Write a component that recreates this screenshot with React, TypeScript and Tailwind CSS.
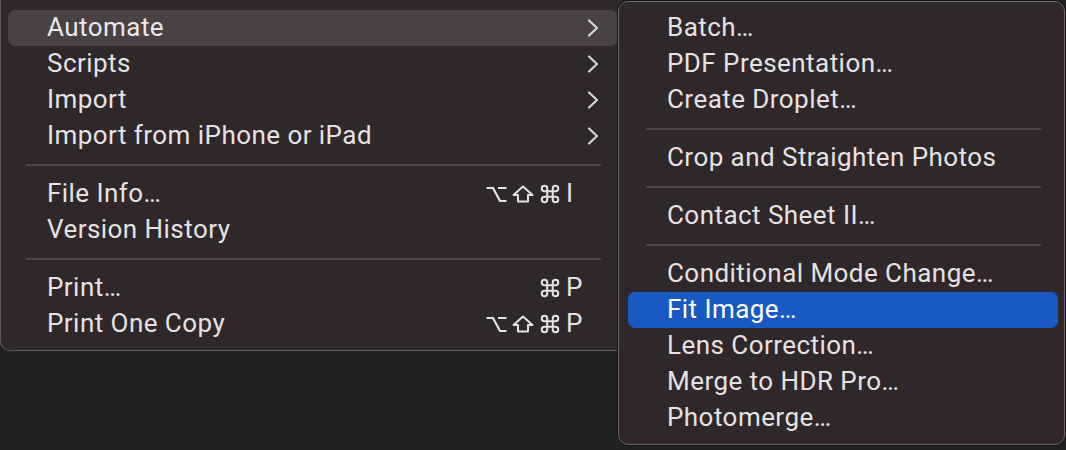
import React from 'react';

type Item =
  | { kind: 'item'; label: string; submenu?: boolean; mods?: string[]; keyChar?: string; active?: boolean; selected?: boolean }
  | { kind: 'sep' };

const fileItems: Item[] = [
  { kind: 'item', label: 'Automate', submenu: true, active: true },
  { kind: 'item', label: 'Scripts', submenu: true },
  { kind: 'item', label: 'Import', submenu: true },
  { kind: 'item', label: 'Import from iPhone or iPad', submenu: true },
  { kind: 'sep' },
  { kind: 'item', label: 'File Info…', mods: ['opt', 'shift', 'cmd'], keyChar: 'I' },
  { kind: 'item', label: 'Version History' },
  { kind: 'sep' },
  { kind: 'item', label: 'Print…', mods: ['cmd'], keyChar: 'P' },
  { kind: 'item', label: 'Print One Copy', mods: ['opt', 'shift', 'cmd'], keyChar: 'P' },
];

const automateItems: Item[] = [
  { kind: 'item', label: 'Batch…' },
  { kind: 'item', label: 'PDF Presentation…' },
  { kind: 'item', label: 'Create Droplet…' },
  { kind: 'sep' },
  { kind: 'item', label: 'Crop and Straighten Photos' },
  { kind: 'sep' },
  { kind: 'item', label: 'Contact Sheet II…' },
  { kind: 'sep' },
  { kind: 'item', label: 'Conditional Mode Change…' },
  { kind: 'item', label: 'Fit Image…', selected: true },
  { kind: 'item', label: 'Lens Correction…' },
  { kind: 'item', label: 'Merge to HDR Pro…' },
  { kind: 'item', label: 'Photomerge…' },
];

const Chevron = () => (
  <svg width="12" height="18" viewBox="0 0 12 18" fill="none" stroke="#d9d5d6" strokeWidth="2.2" strokeLinecap="round" strokeLinejoin="round">
    <path d="M2 1.5L10 9L2 16.5" />
  </svg>
);

const OptionKey = () => (
  <svg width="21" height="17" viewBox="0 0 21 17" fill="none" stroke="#e6e2e3" strokeWidth="2.2">
    <path d="M0.5 2H7L14 15H20.5M12 2H20.5" />
  </svg>
);

const ShiftKey = () => (
  <svg width="22" height="18" viewBox="0 0 22 18" fill="none" stroke="#e6e2e3" strokeWidth="2" strokeLinejoin="round">
    <path d="M11 1.5L20.5 10H16V16.5H6V10H1.5Z" />
  </svg>
);

const CmdKey = () => (
  <svg width="22" height="22" viewBox="0 0 24 24" fill="none" stroke="#e6e2e3" strokeWidth="2.2" strokeLinecap="round" strokeLinejoin="round">
    <path d="M15 6v12a3 3 0 1 0 3-3H6a3 3 0 1 0 3 3V6a3 3 0 1 0-3 3h12a3 3 0 1 0-3-3" />
  </svg>
);

const Shortcut = ({ mods, keyChar }: { mods: string[]; keyChar: string }) => (
  <div className="flex items-center gap-[5px] pr-[36px]">
    {mods.map((m) => (
      <span key={m} className="flex items-center">
        {m === 'opt' && <OptionKey />}
        {m === 'shift' && <ShiftKey />}
        {m === 'cmd' && <CmdKey />}
      </span>
    ))}
    <span className="w-[16px] pb-[2px] text-[26px] leading-none text-[#e6e2e3]">{keyChar}</span>
  </div>
);

const MenuRows = ({ items }: { items: Item[] }) => (
  <>
    {items.map((item, i) =>
      item.kind === 'sep' ? (
        <div key={i} className="h-[22px] flex items-center pl-[18px] pr-[17px]">
          <div className="h-[2px] w-full bg-[#4d4547]" />
        </div>
      ) : (
        <div
          key={i}
          className={`h-[36px] flex items-center justify-between rounded-[7px] pl-[39px] ${
            item.selected ? 'bg-[#1859c2] text-white' : item.active ? 'bg-[#4a4145] text-[#ece8e9]' : 'text-[#e6e2e3]'
          }`}
        >
          <span className="pb-[2px] text-[26px] leading-none whitespace-nowrap">{item.label}</span>
          {item.submenu && (
            <span className="pr-[19px] flex items-center">
              <Chevron />
            </span>
          )}
          {item.mods && item.keyChar && <Shortcut mods={item.mods} keyChar={item.keyChar} />}
        </div>
      )
    )}
  </>
);

export default function App() {
  return (
    <div className="w-[1066px] h-[450px] overflow-hidden bg-[#222222] flex items-start font-['Roboto',sans-serif] tracking-[0.45px]">
      <div className="w-[626px] shrink-0 bg-[#2f2729] border-l border-b border-[#5f5759] rounded-bl-[10px] pt-[10px] pb-[8px] pl-[7px] pr-[8px]">
        <MenuRows items={fileItems} />
      </div>
      <div className="relative z-10 -ml-[8px] mt-[1px] w-[447px] shrink-0 bg-[#2f272a] border border-[#6d6668] shadow-[0_0_0_1px_#141414] rounded-[10px] pt-[8px] pb-[8px] pl-[9px] pr-[6px]">
        <MenuRows items={automateItems} />
      </div>
    </div>
  );
}
